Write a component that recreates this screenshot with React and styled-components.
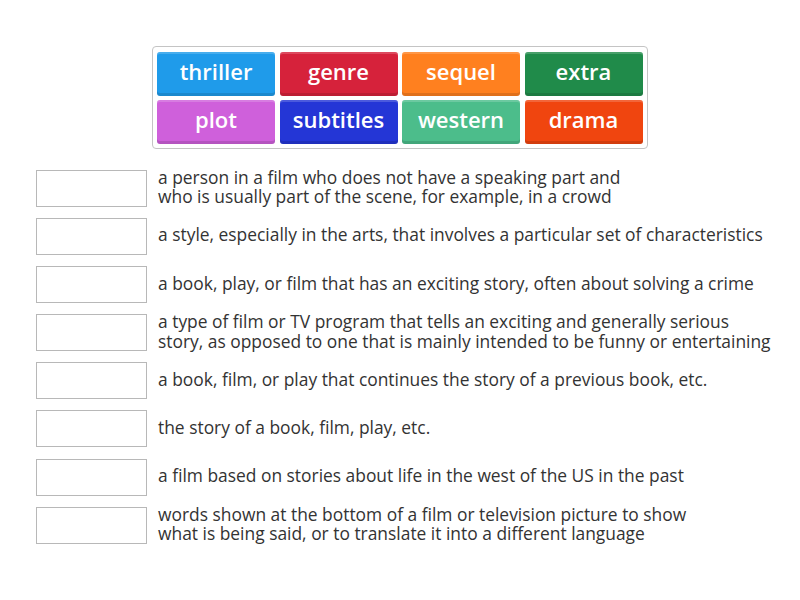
import React from 'react';
import styled, { createGlobalStyle } from 'styled-components';

const GlobalStyle = createGlobalStyle`
  body {
    margin: 0;
    background: #fff;
    font-family: "Open Sans", "Liberation Sans", sans-serif;
  }
`;

const Page = styled.div`
  width: 800px;
  height: 600px;
  padding-top: 46px;
  box-sizing: border-box;
  display: flex;
  flex-direction: column;
  align-items: center;
`;

const Bank = styled.div`
  display: grid;
  grid-template-columns: repeat(4, 118px);
  grid-auto-rows: 44px;
  gap: 4px 4.5px;
  padding: 5px 4px 4px 4.5px;
  border: 1px solid #c4c4c4;
  border-radius: 4px;
  margin-left: -1px;
`;

const Tile = styled.div`
  display: flex;
  align-items: center;
  justify-content: center;
  background: ${p => p.bg};
  border-radius: 3px;
  box-shadow: inset 0 -3px 0 rgba(0, 0, 0, 0.12), inset 0 2px 0 rgba(255, 255, 255, 0.18);
  color: #fff;
  font-size: 22px;
  font-weight: 600;
  padding-bottom: 7px;
  box-sizing: border-box;
`;

const List = styled.div`
  align-self: stretch;
  display: flex;
  flex-direction: column;
  gap: 12.2px;
  padding: 21px 0 0 36px;
`;

const Row = styled.div`
  display: flex;
  align-items: center;
  gap: 11px;
  height: 36px;
`;

const Slot = styled.div`
  flex: none;
  width: 111px;
  height: 37px;
  box-sizing: border-box;
  border: 1px solid #b8b8b8;
  background: #fff;
`;

const Def = styled.div`
  font-size: 17.4px;
  line-height: 19.5px;
  color: #333;
  white-space: nowrap;
  padding-bottom: 2px;
`;

const tiles = [
  ['thriller', '#1f9bea'],
  ['genre', '#d6223b'],
  ['sequel', '#ff801f'],
  ['extra', '#208b4a'],
  ['plot', '#cf60db'],
  ['subtitles', '#2436d6'],
  ['western', '#4cbd8b'],
  ['drama', '#f0450f'],
];

const defs = [
  ['a person in a film who does not have a speaking part and', 'who is usually part of the scene, for example, in a crowd'],
  ['a style, especially in the arts, that involves a particular set of characteristics'],
  ['a book, play, or film that has an exciting story, often about solving a crime'],
  ['a type of film or TV program that tells an exciting and generally serious', 'story, as opposed to one that is mainly intended to be funny or entertaining'],
  ['a book, film, or play that continues the story of a previous book, etc.'],
  ['the story of a book, film, play, etc.'],
  ['a film based on stories about life in the west of the US in the past'],
  ['words shown at the bottom of a film or television picture to show', 'what is being said, or to translate it into a different language'],
];

export default function App() {
  return (
    <>
      <GlobalStyle />
      <Page>
        <Bank>
          {tiles.map(([w, c]) => (
            <Tile key={w} bg={c}>{w}</Tile>
          ))}
        </Bank>
        <List>
          {defs.map((lines, i) => (
            <Row key={i}>
              <Slot />
              <Def>
                {lines.map((l, j) => (
                  <div key={j}>{l}</div>
                ))}
              </Def>
            </Row>
          ))}
        </List>
      </Page>
    </>
  );
}
